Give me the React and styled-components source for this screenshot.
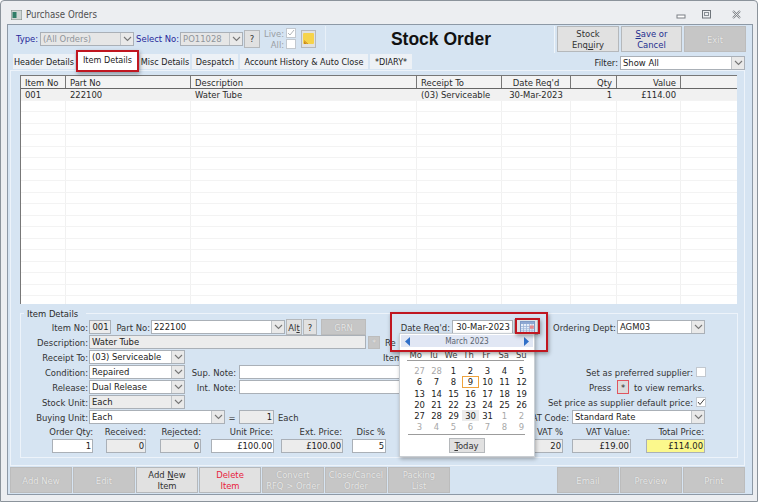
import React from "react";
import styled, { createGlobalStyle } from "styled-components";

const Global = createGlobalStyle`
  html, body { margin: 0; padding: 0; background: #fff; }
  body { font-family: "DejaVu Sans", "Noto Sans", sans-serif; font-stretch: condensed; font-size: 9.4px; color: #2a2a2a; }
  * { box-sizing: border-box; }
`;

const Window = styled.div`
  width: 758px; height: 502px; border: 1px solid #8b939b; border-radius: 4px 4px 0 0;
  background: #eceef1; padding: 0 4px 0 6px; overflow: hidden;
`;
const TitleBar = styled.div`
  height: 23px; display: flex; align-items: center; padding: 4px 0 0 4px; color: #505050; gap: 4px;
`;
const TitleText = styled.span`flex: 1; font-size: 9.6px;`;
const WinCtl = styled.svg`width: 11px; height: 11px; margin-left: ${p => p.$ml}px; margin-right: ${p => p.$mr || 0}px;`;
const Frame = styled.div`
  height: 471px; border: 1px solid #8d99a6; background: #d6e4f2; padding: 1px 0 0 2px;
`;
const TopBar = styled.div`display: flex; height: 28px; gap: 2px;`;
const TopGroup = styled.div`
  width: 316px; border: 1px solid #e8f0f8; border-width: 0 1px 0 0; display: flex; align-items: center; padding-left: 6px; height: 25px; white-space: nowrap;
`;
const TitleBox = styled.div`
  width: 227px; height: 27px; display: flex; align-items: center; justify-content: center;
  font: bold 17.5px "Liberation Sans", Arial, sans-serif; color: #111; border-right: 1px solid #f0f5fa;
`;
const Btn = styled.button`
  appearance: none; font: inherit; padding: 0; margin: 0 0 0 ${p => p.$ml || 0}px;
  width: ${p => p.$w}px; height: ${p => p.$h || 26}px; flex: none;
  border: 1px solid ${p => (p.$off ? "#bcbcbc" : "#b5b8bb")};
  background: ${p => (p.$off ? "#c6c6c6" : "#e1e1e1")};
  color: ${p => (p.$off ? "#e9e9e9" : p.$red ? "#e8213c" : "#333")};
  text-shadow: ${p => (p.$off ? "0 0 1px #9a9a9a" : "none")};
  line-height: 11px; text-align: center; display: flex; align-items: center; justify-content: center; white-space: nowrap;
`;
const CalBtn = styled(Btn)`justify-content: flex-end; background: #dfe3e8; padding-right: 2px;`;
const U = styled.span`text-decoration: underline;`;
const BlueLabel = styled.span`
  color: #28289a; margin-left: ${p => p.$ml || 0}px; width: ${p => p.$w}px; text-align: right; flex: none;
`;
const GreyLabel = styled.span`color: #9a9ea4; width: ${p => p.$w}px; text-align: right;`;
const LiveStack = styled.div`
  display: flex; flex-direction: column; gap: 2px; margin-left: 6px; width: 30px; align-items: flex-end;
`;
const LiveRow = styled.div`display: flex; align-items: center; gap: 2px; height: 9px;`;
const Check = styled.span`
  width: ${p => p.$s || 10}px; height: ${p => p.$s || 10}px; background: ${p => p.$bg || "#fff"}; border: 1px solid #c2c8cf;
  display: inline-flex; flex: none; margin-left: ${p => p.$ml || 0}px;
`;
const TabsRow = styled.div`display: flex; height: 16px; align-items: flex-end; padding-left: 3px; position: relative;`;
const Tab = styled.div`
  height: ${p => (p.$on ? 18 : 15)}px; width: ${p => p.$w}px; margin-right: ${p => p.$mr ?? 2}px; flex: none;
  background: ${p => (p.$on ? "#fff" : "#edf1f6")}; text-align: center; line-height: ${p => (p.$on ? 17 : 16)}px; white-space: nowrap;
  color: #222; position: relative; top: ${p => (p.$on ? 0 : -1)}px; font-size: 9px;
`;
const FilterWrap = styled.div`
  margin-left: auto; display: flex; align-items: center; gap: 2px; height: 15px; align-self: flex-start; margin-right: 7px; margin-top: 1px;
`;
const Body = styled.div`
  width: 735px; height: 396px; border: 1px solid #edf3fa; padding: 4px 0 0 9px; position: relative;
`;
const List = styled.div`
  width: 717px; height: 229px; background: #fff; overflow: hidden; position: relative; border-left: 1px solid #777;
`;
const ListRow = styled.div`
  display: flex; height: ${p => (p.$head ? 14 : 11.5)}px; line-height: ${p => (p.$head ? 13 : 12)}px;
  background: ${p => (p.$head ? "#f3f3f3" : p.$fill ? "#f1f1f1" : "#fff")};
  border-top: ${p => (p.$head ? "1px solid #777" : "none")};
  border-bottom: 1px solid ${p => (p.$head ? "#666" : "#f3f3f3")};
`;
const ListCell = styled.div`
  width: ${p => p.$w}px; flex: none; padding: 0 4px; text-align: ${p => p.$a || "left"}; white-space: nowrap; overflow: hidden;
  border-right: 1px solid ${p => (p.$head ? "#777" : "#f1f1f1")};
`;
const Group = styled.div`
  width: 718px; height: 145px; margin-top: 9px; border: 1px solid #edf3fa; position: relative; padding-top: 5.5px;
`;
const Legend = styled.span`position: absolute; left: 3px; top: -6px; background: #d6e4f2; padding: 0 8px 0 3px; line-height: 11px;`;
const Row = styled.div`
  display: flex; align-items: center; height: ${p => p.$h || 15}px; white-space: nowrap;
`;
const Label = styled.span`
  width: ${p => p.$w}px; margin-left: ${p => p.$ml || 0}px; text-align: ${p => p.$a || "right"}; flex: none; color: #333;
`;
const Field = styled.div`
  width: ${p => p.$w}px; margin-left: ${p => p.$ml || 0}px; height: 14px; flex: none; line-height: 12px; padding: 0 1px 0 2px;
  border: 1px solid #aab0b7; background: ${p => p.$bg || "#fff"}; text-align: ${p => p.$a || "left"}; color: #222; overflow: hidden;
`;
const Combo = styled(Field)`display: flex; justify-content: space-between; padding-right: 0;`;
const Drop = styled.span`
  width: 13px; flex: none; background: #e9e9e9; border-left: 1px solid #c0c4c8; display: flex; align-items: center; justify-content: center;
`;
const Chev = () => (
  <svg width="9" height="6" viewBox="0 0 9 6"><path d="M1 1l3.5 3.5L8 1" fill="none" stroke="#777" strokeWidth="1.1" /></svg>
);
const ComboBox = ({ w, ml, bg, children }) => (
  <Combo $w={w} $ml={ml} $bg={bg}>
    <span>{children}</span>
    <Drop><Chev /></Drop>
  </Combo>
);
const Peek = styled.span`margin-left: ${p => p.$ml}px; color: #333;`;
const Calendar = styled.div`
  position: absolute; left: 378px; top: 19px; width: 136px; height: 124px; background: #fff;
  border: 1px solid #c9ced3; box-shadow: 1px 2px 4px rgba(0,0,0,.3); padding: 1px 1px 0; z-index: 2;
`;
const CalHead = styled.div`
  height: 12px; background: #e1e7f4; display: flex; align-items: center; justify-content: space-between; padding: 0 4px;
  color: #59636f; font-size: 8.2px;
`;
const WeekRow = styled.div`
  display: grid; grid-template-columns: repeat(7, 17.6px); margin: 1px 0 0 6px; height: 13px; line-height: 14px;
  width: 117px; border-bottom: 1px solid #9c9c9c; text-align: center; color: #444;
`;
const Days = styled.div`
  display: grid; grid-template-columns: repeat(7, 17px); grid-auto-rows: 11.3px; margin: 4px 0 0 10px; text-align: center; line-height: 11px;
`;
const Day = styled.span`
  color: ${p => (p.$dim ? "#a8a8a8" : "#222")}; background: ${p => (p.$sel ? "#ececec" : "transparent")};
  box-shadow: ${p => (p.$now ? "inset 0 0 0 1px #efa33c" : "none")};
`;
const CalFoot = styled.div`
  width: 117px; margin: 1px 0 0 7px; border-top: 1px solid #9c9c9c; padding-top: 3px; display: flex; justify-content: center;
`;
const Mark = styled.div`
  position: absolute; left: ${p => p.$x}px; top: ${p => p.$y}px; width: ${p => p.$w}px; height: ${p => p.$h}px;
  border: 2px solid #c01620; box-shadow: 1px 2px 4px rgba(0,0,0,.35); pointer-events: none; z-index: 3;
`;
const Bottom = styled.div`display: flex; gap: 1px; margin-top: 1px;`;
const RightBtns = styled.div`display: flex; gap: 1px; margin-left: auto; margin-right: 7px;`;
const TopBtns = styled.div`display: flex; gap: 2px;`;
const DiaryPress = styled.span`
  width: 12px; height: 14px; margin-left: 6px; border: 1px solid #e0555f; background: #dcdcdc; flex: none; text-align: center; line-height: 14px;
`;
const GreyText = styled.span`color: #8f959b;`;
const SaveText = styled.span`color: #1f2f8f;`;

const cols = [45, 125, 226, 85, 69, 46, 64, 57];
const heads = ["Item No", "Part No", "Description", "Receipt To", "Date Req'd", "Qty", "Value", ""];
const first = ["001", "222100", "Water Tube", "(03) Serviceable", "30-Mar-2023", "1", "£114.00", ""];
const aligns = ["left", "left", "left", "left", "center", "right", "right", "left"];

const weeks = [
  [27, 28, 1, 2, 3, 4, 5], [6, 7, 8, 9, 10, 11, 12], [13, 14, 15, 16, 17, 18, 19],
  [20, 21, 22, 23, 24, 25, 26], [27, 28, 29, 30, 31, 1, 2], [3, 4, 5, 6, 7, 8, 9],
];

const CalIcon = () => (
  <svg width="15" height="12" viewBox="0 0 15 12">
    <rect x=".5" y=".5" width="14" height="11" fill="#e6edf8" stroke="#7f9ac6" />
    <rect x="1" y="1" width="13" height="2" fill="#8ea8d2" />
    <path d="M3.5 3v8M6.5 3v8M9.5 3v8M12 3v8M1 5.5h13M1 7.7h13M1 9.8h13" stroke="#9db4d8" strokeWidth=".8" />
    <rect x="9.8" y="4.5" width="4" height="3.2" fill="#e88a8e" />
  </svg>
);

export default function App() {
  return (
    <>
      <Global />
      <Window>
        <TitleBar>
          <svg width="11" height="10" viewBox="0 0 11 10">
            <rect width="11" height="10" fill="#cfd6d4" stroke="#7d8a88" />
            <rect x="1.5" y="2" width="4" height="6" fill="#2f7d68" />
          </svg>
          <TitleText>Purchase Orders</TitleText>
          <WinCtl viewBox="0 0 11 11"><rect x="1" y="6" width="8" height="3" fill="#fff" stroke="#7a7f85" /></WinCtl>
          <WinCtl $ml={10} viewBox="0 0 11 11"><rect x="1.5" y="1.5" width="8" height="7.5" fill="none" stroke="#6f757b" /><rect x="3.5" y="3.5" width="4" height="3" fill="none" stroke="#8a9096" /></WinCtl>
          <WinCtl $ml={15} $mr={11} viewBox="0 0 11 11"><path d="M2 2l7 7M9 2L2 9" stroke="#7d8288" strokeWidth="2" /><path d="M2 2l7 7M9 2L2 9" stroke="#fff" strokeWidth=".7" /></WinCtl>
        </TitleBar>
        <Frame>
          <TopBar>
            <TopGroup>
              <BlueLabel>Type:</BlueLabel>
              <ComboBox w={94} ml={2} bg="#e6e6e6"><GreyText>(All Orders)</GreyText></ComboBox>
              <BlueLabel $ml={2} $w={42}>Select No:</BlueLabel>
              <ComboBox w={63} ml={2} bg="#e6e6e6"><GreyText>PO11028</GreyText></ComboBox>
              <Btn $w={16} $h={18} $ml={1}>?</Btn>
              <LiveStack>
                <LiveRow><GreyLabel>Live:</GreyLabel><Check><svg width="8" height="8" viewBox="0 0 8 8"><path d="M1 4l2 2 4-5" fill="none" stroke="#b0b4b8" /></svg></Check></LiveRow>
                <LiveRow><GreyLabel>All:</GreyLabel><Check /></LiveRow>
              </LiveStack>
              <Btn $w={15} $h={18} $ml={5}>
                <svg width="11" height="11" viewBox="0 0 11 11"><rect width="11" height="11" rx="1" fill="#f6d34a" /><path d="M1 8l3 3H1z" fill="#c98a1b" /><path d="M1 7.5L5 11" stroke="#d2941f" /></svg>
              </Btn>
            </TopGroup>
            <TitleBox>Stock Order</TitleBox>
            <TopBtns>
              <Btn $w={62}><span>Stock<br />Enq<U>u</U>iry</span></Btn>
              <Btn $w={61}><SaveText><U>S</U>ave or<br />Cancel</SaveText></Btn>
              <Btn $w={62} $off>Exit</Btn>
            </TopBtns>
          </TopBar>
          <TabsRow>
            <Tab $w={62}>Header Details</Tab>
            <Tab $w={61} $on>Item Details</Tab>
            <Tab $w={50}>Misc Details</Tab>
            <Tab $w={46}>Despatch</Tab>
            <Tab $w={128}>Account History &amp; Auto Close</Tab>
            <Tab $w={42}>*DIARY*</Tab>
            <FilterWrap>
              <span>Filter:</span>
              <ComboBox w={125}>Show All</ComboBox>
            </FilterWrap>
            <Mark $x={66} $y={-4} $w={63} $h={22} />
          </TabsRow>
          <Body>
            <List>
              <ListRow $head>
                {heads.map((h, i) => <ListCell key={i} $head $w={cols[i]} $a={aligns[i]}>{h}</ListCell>)}
              </ListRow>
              {Array.from({ length: 19 }, (_, r) => (
                <ListRow key={r} $fill={r === 0}>
                  {cols.map((w, i) => <ListCell key={i} $w={w} $a={aligns[i]}>{r === 0 ? first[i] : ""}</ListCell>)}
                </ListRow>
              ))}
            </List>
            <Group>
              <Legend>Item Details</Legend>
              <Row>
                <Label $w={67}>Item No:</Label>
                <Field $w={22} $ml={1} $a="center" $bg="#ececec">001</Field>
                <Label $w={34} $ml={5}>Part No:</Label>
                <ComboBox w={134} ml={1}>222100</ComboBox>
                <Btn $w={16} $h={16} $ml={1}>Al<U>t</U></Btn>
                <Btn $w={14} $h={16} $ml={1}>?</Btn>
                <Btn $w={45} $h={16} $ml={4} $off>GRN</Btn>
                <Label $w={50} $ml={34}>Date Req'd:</Label>
                <Field $w={61} $ml={2} $a="center">30-Mar-2023</Field>
                <CalBtn $w={24} $h={16} $ml={1}><CalIcon /></CalBtn>
                <Label $w={62} $ml={15}>Ordering Dept:</Label>
                <ComboBox w={88} ml={2}>AGM03</ComboBox>
              </Row>
              <Row>
                <Label $w={67}>Description:</Label>
                <Field $w={277} $ml={1} $bg="#ececec">Water Tube</Field>
                <Btn $w={12} $h={13} $ml={2} $off>*</Btn>
                <Peek $ml={5}>Re</Peek>
              </Row>
              <Row>
                <Label $w={67}>Receipt To:</Label>
                <ComboBox w={96} ml={1}>(03) Serviceable</ComboBox>
                <Peek $ml={198}>Item</Peek>
              </Row>
              <Row>
                <Label $w={67}>Condition:</Label>
                <ComboBox w={96} ml={1}>Repaired</ComboBox>
                <Label $w={51}>Sup. Note:</Label>
                <Field $w={180} $ml={3} />
                <Label $w={274}>Set as preferred supplier:</Label>
                <Check $s={10} $ml={3} />
              </Row>
              <Row>
                <Label $w={67}>Release:</Label>
                <ComboBox w={96} ml={1}>Dual Release</ComboBox>
                <Label $w={51}>Int. Note:</Label>
                <Field $w={180} $ml={3} />
                <Label $w={22} $ml={170}>Press</Label>
                <DiaryPress>*</DiaryPress>
                <Label $w={70} $ml={5}>to view remarks.</Label>
              </Row>
              <Row>
                <Label $w={67}>Stock Unit:</Label>
                <ComboBox w={96} ml={1} bg="#ececec">Each</ComboBox>
                <Label $w={508}>Set price as supplier default price:</Label>
                <Check $s={10} $ml={3}><svg width="8" height="8" viewBox="0 0 8 8"><path d="M1 4l2 2.5L7.5 1" fill="none" stroke="#444" /></svg></Check>
              </Row>
              <Row>
                <Label $w={67}>Buying Unit:</Label>
                <ComboBox w={136} ml={1}>Each</ComboBox>
                <Label $w={14} $a="center">=</Label>
                <Field $w={35} $a="right" $bg="#ececec">1</Field>
                <Label $w={22} $ml={4} $a="left">Each</Label>
                <Label $w={269}>VAT Code:</Label>
                <ComboBox w={133} ml={3}>Standard Rate</ComboBox>
              </Row>
              <Row $h={14}>
                <Label $w={72}>Order Qty:</Label>
                <Label $w={53}>Received:</Label>
                <Label $w={55}>Rejected:</Label>
                <Label $w={72}>Unit Price:</Label>
                <Label $w={69}>Ext. Price:</Label>
                <Label $w={43}>Disc %</Label>
                <Label $w={178}>VAT %</Label>
                <Label $w={67}>VAT Value:</Label>
                <Label $w={74}>Total Price:</Label>
              </Row>
              <Row>
                <Field $w={41} $ml={31} $a="right">1</Field>
                <Field $w={40} $ml={13} $a="right" $bg="#ececec">0</Field>
                <Field $w={41} $ml={14} $a="right" $bg="#ececec">0</Field>
                <Field $w={63} $ml={10} $a="right">£100.00</Field>
                <Field $w={62} $ml={7} $a="right" $bg="#ececec">£100.00</Field>
                <Field $w={34} $ml={9} $a="right">5</Field>
                <Field $w={36} $ml={141} $a="right" $bg="#ececec">20</Field>
                <Field $w={59} $ml={9} $a="right" $bg="#ececec">£19.00</Field>
                <Field $w={59} $ml={15} $a="right" $bg="#fbf88c">£114.00</Field>
              </Row>
              <Calendar>
                <CalHead>
                  <svg width="5" height="9" viewBox="0 0 5 9"><path d="M5 0v9L0 4.5z" fill="#2f6fc8" /></svg>
                  <span>March 2023</span>
                  <svg width="5" height="9" viewBox="0 0 5 9"><path d="M0 0v9l5-4.5z" fill="#2f6fc8" /></svg>
                </CalHead>
                <WeekRow>
                  {["Mo", "Tu", "We", "Th", "Fr", "Sa", "Su"].map(d => <span key={d}>{d}</span>)}
                </WeekRow>
                <Days>
                  {weeks.flatMap((w, i) => w.map((d, j) => (
                    <Day key={`${i}-${j}`} $dim={(i === 0 && d > 20) || (i === 4 && d < 10) || i === 5} $sel={i === 4 && d === 30} $now={i === 1 && d === 9}>{d}</Day>
                  )))}
                </Days>
                <CalFoot>
                  <Btn $w={36} $h={15}><span><U>T</U>oday</span></Btn>
                </CalFoot>
              </Calendar>
              <Mark $x={369} $y={-2} $w={158} $h={40} />
              <Mark $x={494} $y={4} $w={25} $h={16} />
            </Group>
          </Body>
          <Bottom>
            <Btn $w={62} $off>Add New</Btn>
            <Btn $w={62} $off>Edit</Btn>
            <Btn $w={62}><span>Add <U>N</U>ew<br />Item</span></Btn>
            <Btn $w={62} $red><span>Delete<br />Item</span></Btn>
            <Btn $w={62} $off><span>Convert<br />RFQ &gt; Order</span></Btn>
            <Btn $w={62} $off><span>Close/Cancel<br />Order</span></Btn>
            <Btn $w={62} $off><span>Packing<br />List</span></Btn>
            <RightBtns>
              <Btn $w={62} $off>Email</Btn>
              <Btn $w={62} $off>Preview</Btn>
              <Btn $w={62} $off>Print</Btn>
            </RightBtns>
          </Bottom>
        </Frame>
      </Window>
    </>
  );
}
